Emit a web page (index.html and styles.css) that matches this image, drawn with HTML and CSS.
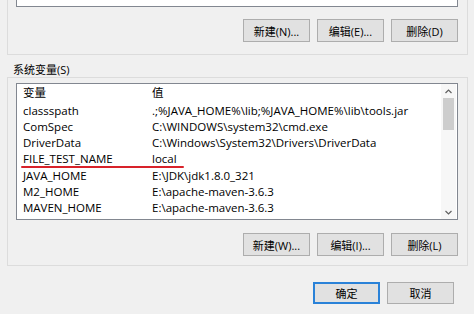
FILE: index.html
```html
<!DOCTYPE html>
<html lang="zh">
<head>
<meta charset="UTF-8">
<title>环境变量</title>
<link rel="stylesheet" href="styles.css">
</head>
<body>
<div class="window">
  <div class="group group-user">
    <div class="list list-stub"></div>
    <div class="btn-row">
      <button class="btn">新建(N)...</button>
      <button class="btn">编辑(E)...</button>
      <button class="btn">删除(D)</button>
    </div>
  </div>

  <div class="group-label">系统变量(S)</div>
  <div class="group group-sys">
    <div class="list">
      <div class="rows">
        <div class="row head"><span class="c1">变量</span><span class="c2">值</span></div>
        <div class="row"><span class="c1">classspath</span><span class="c2">.;%JAVA_HOME%\lib;%JAVA_HOME%\lib\tools.jar</span></div>
        <div class="row"><span class="c1">ComSpec</span><span class="c2">C:\WINDOWS\system32\cmd.exe</span></div>
        <div class="row"><span class="c1">DriverData</span><span class="c2">C:\Windows\System32\Drivers\DriverData</span></div>
        <div class="row marked"><span class="c1">FILE_TEST_NAME</span><span class="c2">local</span><span class="mark"></span></div>
        <div class="row"><span class="c1">JAVA_HOME</span><span class="c2">E:\JDK\jdk1.8.0_321</span></div>
        <div class="row"><span class="c1">M2_HOME</span><span class="c2">E:\apache-maven-3.6.3</span></div>
        <div class="row"><span class="c1">MAVEN_HOME</span><span class="c2">E:\apache-maven-3.6.3</span></div>
      </div>
      <div class="scrollbar">
        <div class="arrow">
          <svg width="7" height="5" viewBox="0 0 7 5"><path d="M0.5 4L3.5 1L6.5 4" fill="none" stroke="#606060" stroke-width="1.2"/></svg>
        </div>
        <div class="track"><div class="thumb"></div></div>
        <div class="arrow">
          <svg width="7" height="5" viewBox="0 0 7 5"><path d="M0.5 1L3.5 4L6.5 1" fill="none" stroke="#606060" stroke-width="1.2"/></svg>
        </div>
      </div>
    </div>
    <div class="btn-row">
      <button class="btn">新建(W)...</button>
      <button class="btn">编辑(I)...</button>
      <button class="btn">删除(L)</button>
    </div>
  </div>

  <div class="dialog-row">
    <button class="btn default">确定</button>
    <button class="btn">取消</button>
  </div>
</div>
</body>
</html>
```

FILE: styles.css
```css
body {
  margin: 0;
  background: #f0f0f0;
  font-family: "Open Sans", "Noto Sans CJK SC", sans-serif;
  font-size: 11.5px;
  color: #000;
  overflow: hidden;
}
.window {
  width: 461px;
  padding-left: 7px;
}
.group {
  border: 1px solid #dcdcdc;
}
.group-user {
  border-top: none;
  padding: 0 9px 12px 8px;
}
.list {
  background: #fff;
  border: 1px solid #828790;
  display: flex;
}
.list-stub {
  height: 6px;
  border-top: none;
}
.btn-row {
  display: flex;
  justify-content: flex-end;
  gap: 7px;
  margin-top: 12px;
}
.btn {
  width: 67px;
  height: 23px;
  padding: 0;
  background: #e1e1e1;
  border: 1px solid #adadad;
  font: inherit;
  font-size: 11px;
  color: #000;
}
.btn.default {
  border: 2px solid #2a82d8;
}
.group-label {
  margin-top: 7px;
  height: 15px;
  line-height: 15px;
  padding-left: 6px;
  font-size: 11px;
}
.group-sys {
  padding: 5px 9px 9px 8px;
}
.group-sys .list {
  height: 135px;
}
.group-sys .btn-row {
  margin-top: 13px;
}
.rows {
  flex: 1;
  position: relative;
}
.row {
  display: flex;
  height: 16.3px;
  line-height: 16.3px;
  white-space: nowrap;
  position: relative;
}
.row.head {
  height: 18px;
  line-height: 18px;
  margin-bottom: 0.6px;
}
.c1 {
  width: 135px;
  padding-left: 6px;
  box-sizing: border-box;
}
.c2 {
  flex: 1;
}
.mark {
  position: absolute;
  left: 4px;
  top: 14.5px;
  width: 163px;
  height: 2.5px;
  background: #d8222a;
  border-radius: 1px;
}
.scrollbar {
  width: 15px;
  margin-right: 1px;
  background: #f7f7f7;
  display: flex;
  flex-direction: column;
}
.arrow {
  height: 14px;
  display: flex;
  align-items: center;
  justify-content: center;
}
.track {
  flex: 1;
  padding: 0 2px 0 2px;
}
.thumb {
  height: 32px;
  background: #cdcdcd;
}
.dialog-row {
  display: flex;
  justify-content: flex-end;
  gap: 7px;
  margin-top: 16px;
  padding-right: 14px;
}
.dialog-row .btn {
  height: 22px;
}
```
